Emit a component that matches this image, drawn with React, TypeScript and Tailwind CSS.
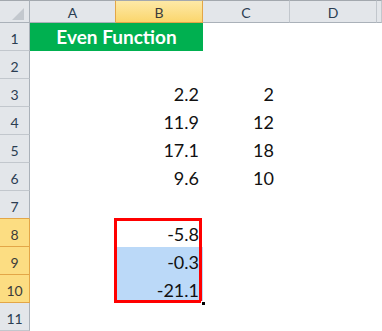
import React from 'react';

type Cell = { text?: string; sel?: boolean };

const columns = [
    { label: 'A', active: false },
    { label: 'B', active: true },
    { label: 'C', active: false },
    { label: 'D', active: false },
    { label: '', active: false },
];

// values for column B and C, rows 1..11
const rows: { b: Cell; c: Cell }[] = [
    { b: {}, c: {} },
    { b: {}, c: {} },
    { b: { text: '2.2' }, c: { text: '2' } },
    { b: { text: '11.9' }, c: { text: '12' } },
    { b: { text: '17.1' }, c: { text: '18' } },
    { b: { text: '9.6' }, c: { text: '10' } },
    { b: {}, c: {} },
    { b: { text: '-5.8' }, c: {} },
    { b: { text: '-0.3', sel: true }, c: {} },
    { b: { text: '-21.1', sel: true }, c: {} },
    { b: {}, c: {} },
];

const activeRows = [8, 9, 10];

const App: React.FC = () => {
    return (
        <div
            className="relative w-[382px] h-[331px] overflow-hidden bg-white text-[#111]"
            style={{ fontFamily: 'Lato, "Open Sans", sans-serif' }}
        >
            <div className="grid grid-cols-[30px_86px_87px_87px_87px_1fr] grid-rows-[23px_repeat(11,28px)]">
                {/* corner */}
                <div className="relative bg-[#e3e6ea] border-t border-t-[#a3a8ae] border-r border-r-[#aab1b9] border-b border-b-[#aab1b9]">
                    <svg className="absolute left-[12px] top-[7px]" width="13" height="13" viewBox="0 0 13 13">
                        <polygon points="12,0 12,12 0,12" fill="#c3c8ce" />
                    </svg>
                </div>

                {columns.map((col, i) => {
                    const nextActive = columns[i + 1]?.active;
                    return (
                        <div
                            key={i}
                            className={`flex items-center justify-center pt-[2px] text-[14px] border-t border-b border-r ${
                                col.active
                                    ? 'bg-gradient-to-b from-[#fde9a6] to-[#fbd66c] border-t-[#a3a8ae] border-b-[#e3a647] border-r-[#e3a647] text-[#3b3b3b]'
                                    : `bg-[#e3e6ea] border-t-[#a3a8ae] border-b-[#aab1b9] text-[#2b3d52] ${nextActive ? 'border-r-[#e3a647]' : 'border-r-[#c2c7cd]'}`
                            }`}
                        >
                            {col.label}
                        </div>
                    );
                })}

                {rows.map((row, idx) => {
                    const n = idx + 1;
                    const active = activeRows.includes(n);
                    const nextActive = activeRows.includes(n + 1);
                    return (
                        <React.Fragment key={n}>
                            <div
                                className={`flex items-center justify-center pt-[3px] text-[14px] border-r border-b ${
                                    active
                                        ? 'bg-[#fcdd82] border-r-[#e3a647] border-b-[#e3a647] text-[#3b3b3b]'
                                        : `bg-[#e3e6ea] border-r-[#aab1b9] text-[#2b3d52] ${nextActive ? 'border-b-[#e3a647]' : 'border-b-[#c2c7cd]'}`
                                }`}
                            >
                                {n}
                            </div>

                            {n === 1 ? (
                                <div className="col-span-2 flex items-center justify-center pt-[1px] bg-[#00b050] text-white font-bold text-[19px]">
                                    Even Function
                                </div>
                            ) : (
                                <>
                                    <div />
                                    <div
                                        className={`flex items-end justify-end pb-[4px] pr-[4px] text-[18px] leading-none ${
                                            row.b.sel ? 'bg-[#bbd9f8]' : ''
                                        }`}
                                    >
                                        {row.b.text}
                                    </div>
                                </>
                            )}

                            <div className="flex items-end justify-end pb-[4px] pr-[16px] text-[18px] leading-none">
                                {row.c.text}
                            </div>
                            <div />
                            <div />
                        </React.Fragment>
                    );
                })}
            </div>

            {/* selection outline B8:B10 */}
            <div className="absolute left-[114px] top-[218px] w-[88px] h-[85px] border-[3px] border-[#ff0000]" />
            <div className="absolute left-[201px] top-[301px] w-[5px] h-[5px] bg-black border border-white" />
        </div>
    );
};

export default App;
